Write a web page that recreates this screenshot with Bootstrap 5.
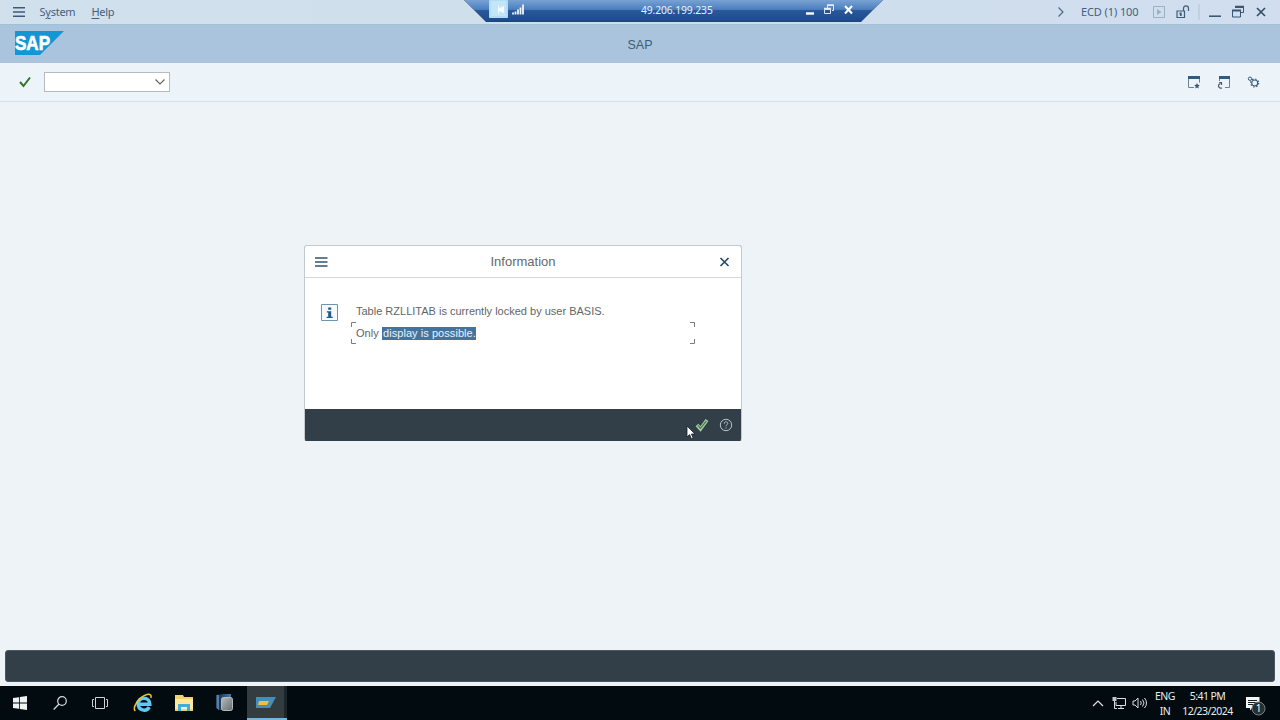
<!DOCTYPE html>
<html lang="en">
<head>
<meta charset="utf-8">
<meta name="viewport" content="width=device-width, initial-scale=1">
<title>SAP</title>
<link href="https://cdn.jsdelivr.net/npm/bootstrap@5.3.0/dist/css/bootstrap.min.css" rel="stylesheet">
<style>
body{width:1280px;height:720px;overflow:hidden;background:#edf3f7;font-family:"Liberation Sans",sans-serif;color:#3d5870}
svg{display:block;flex:none}
.menu-bar{height:24px;background:linear-gradient(90deg,#d0e0ec,#cfdeeb 60%,#d0def0);font:11px/24px "Noto Sans",sans-serif;padding-left:12px;color:#44617f}
.menu-word{letter-spacing:-.25px}
.menu-bar u{text-underline-offset:1.5px;text-decoration-thickness:1px}
.title-bar{height:39px;background:#a9c4dc;border-top:1px solid #a5bed2}
.title-bar h1{font-size:12.5px;line-height:40px;margin:0;color:#3f5d78}
.tool-bar{height:39px;background:#edf4f9;border-bottom:1px solid #d9e1e7}
.cmd-field{width:126px;height:20px;background:#fff;border:1px solid #b5bcc1;margin-left:13px;padding-right:3px}
.work-area{height:548px}
.status-bar{height:32px;margin:0 5px 4px;background:#323e48;border:1px solid #4b565e;border-radius:3px}
.task-bar{height:34px;background:#020b0f;color:#e8eef0;font:10.5px/15px "Noto Sans",sans-serif}
.task-item{width:40px;height:34px}
.tray{padding-top:2px}
.rdp-bar{left:464px;top:0;width:420px;height:22px}
.rdp-title{left:641px;top:3px;font:10.3px/14px "Noto Sans",sans-serif;letter-spacing:-.15px;color:#e9f2fb;white-space:nowrap}
.info-dialog{left:304px;top:245px;width:438px;height:196px;background:#fff;border:1px solid #c2c9cf;border-bottom-color:#414d56;border-radius:3px;color:#626669}
.dialog-head{height:32px;border-bottom:1px solid #d3d7da;padding:0 10px 0 9px}
.dialog-head h2{font-size:13px;line-height:30px;margin:0;color:#63696d}
.dialog-main{height:131px;padding:25px 0 0 16px;font-size:11px;line-height:16px;white-space:nowrap}
.focus-row{width:344px;height:22px;margin-left:-5px;padding:3px 0 0 5px;letter-spacing:.06px}
.focus-row svg{left:0;top:0}
.marked{background:#43749f;color:#e8f2fa;padding:0 0 0 1px;line-height:12px;height:13px;display:inline-block}
.dialog-foot{height:32px;background:#323e48;border-radius:0 0 2px 2px;padding-right:8px}
.pointer{left:686px;top:425px}
</style>
</head>
<body class="position-relative">
<header>
  <nav class="menu-bar d-flex align-items-center">
    <svg width="14" height="14" stroke="#3c5a78" stroke-width="1.4"><path d="M1 2.8h12M1 7h12M1 11.2h12"/></svg>
    <span class="menu-word" style="margin-left:13.5px">S<u>y</u>stem</span><span class="menu-word" style="margin-left:16px"><u>H</u>elp</span>
    <div class="d-flex align-items-center ms-auto" style="padding-right:6px">
      <svg width="10" height="12" fill="none" stroke="#49647e" stroke-width="1.1"><path d="M2.500 1.500 7 6 2.500 10.500"/></svg>
      <span class="text-center text-nowrap" style="width:57px;margin-left:15px;letter-spacing:-.1px">ECD (1) 100</span>
      <svg style="margin:0 10px 0 15px" width="12" height="12" fill="none" stroke="#9dafc1"><path d="M.5.5h11v11H.5z"/><path fill="#9dafc1" stroke="none" d="M4 3v6l4.500-3z"/></svg>
      <svg width="16" height="16" fill="none" stroke="#405d79" stroke-width="1.200"><path d="M2 7h7.500v6.500H2z"/><path d="M8.500 7V4.500c0-3.500 5-3.500 5 0V7"/><path d="M5.800 8.500v3.500M4.500 9.500h2" stroke-width="1.800"/></svg>
      <svg style="margin-left:6px" width="4" height="18"><path d="M2 1v16" stroke="#b4c4d3"/></svg>
      <svg style="margin-left:7px" width="14" height="14"><path d="M1 11.200h12" stroke="#35516c" stroke-width="1.500"/></svg>
      <svg style="margin-left:9px" width="15" height="14" fill="none" stroke="#3a5671"><path d="M1.500 5.500h8v6.500h-8zM4.500 3V1.500h8v6h-2.500"/><path d="M1 5.500h9M4 1.800h9" stroke-width="2.200"/></svg>
      <svg style="margin:0 8px 0 10px" width="10" height="10" stroke="#304a62" stroke-width="1.600"><path d="m1 1 8 8M9 1 1 9"/></svg>
    </div>
  </nav>
  <div class="title-bar position-relative">
    <svg class="position-absolute" style="left:15px;top:6px" width="49" height="24"><path fill="#1297d4" d="M0 0h49L25 24H0z"/><text x="0" y="18.800" textLength="35" lengthAdjust="spacingAndGlyphs" font-family="Liberation Sans" font-size="20" font-weight="700" fill="#fff" stroke="#fff" stroke-width=".7">SAP</text></svg>
    <h1 class="text-center fw-normal">SAP</h1>
  </div>
</header>
<div class="tool-bar d-flex align-items-center">
  <svg style="margin-left:19px" width="12" height="12" fill="none" stroke="#2f7527" stroke-width="2"><path d="m1 6 3.500 4L11 1.500"/></svg>
  <div class="cmd-field d-flex align-items-center justify-content-end"><svg width="12" height="8" fill="none" stroke="#596269" stroke-width="1.100"><path d="m1.500 1.500 4.500 4.500L10.500 1.500"/></svg></div>
  <div class="d-flex align-items-center ms-auto" style="padding-right:19px;gap:16px">
    <svg width="14" height="14" fill="none" stroke="#6c8294"><path d="M7 12.500H1.500v-11h11v6"/><path d="M1 2.500h12" stroke="#315b83" stroke-width="3"/><path fill="#355775" stroke="none" d="m10 8 .8 1.800 2 .2-1.500 1.400.5 2.100-1.800-1.100-1.800 1.100.5-2.100L7.200 10l2-.2z"/></svg>
    <svg width="14" height="14" fill="none" stroke="#6c8294"><path d="M2.500 6V1.500h10v11H8"/><path d="M2 2.500h11" stroke="#315b83" stroke-width="3"/><path stroke="#3b5b77" stroke-width="1.200" d="M5 13c-3.500 1-5-3.500-1.500-4.500M2.200 7.500h2.300V10"/></svg>
    <svg width="14" height="14" fill="none" stroke="#3b5b77"><circle cx="3" cy="3.700" r="1.700"/><circle cx="7.700" cy="8" r="3" stroke-width="1.100"/><circle cx="7.700" cy="8" r="4" stroke-width="1.200" stroke-dasharray="1.400 1.740"/></svg>
  </div>
</div>
<main class="work-area"></main>
<div class="status-bar"></div>
<footer class="task-bar d-flex align-items-center">
  <div class="task-item d-flex align-items-center justify-content-center"><svg width="14" height="14" fill="#eef2f3"><path d="M0 2l6-.8v5.400H0zM6.800 1 14 0v6.600H6.800zM0 7.400h6v5.400L0 12zM6.800 7.400H14V14l-7.200-1z"/></svg></div>
  <div class="task-item d-flex align-items-center justify-content-center"><svg width="14" height="14" fill="none" stroke="#d6dddf" stroke-width="1.200"><circle cx="9" cy="5" r="4.300"/><path d="M6 8 .7 13.500"/></svg></div>
  <div class="task-item d-flex align-items-center justify-content-center"><svg width="16" height="14" fill="none" stroke="#cbd3d5"><path d="M3.500 1.500h9v11h-9zM2 3.500H.5v7H2M14 3.500h1.500v7H14"/></svg></div>
  <div class="task-item d-flex align-items-center justify-content-center" style="margin-left:3px"><svg width="20" height="20" fill="none"><path d="M16.300 14.200c-3 5-11.200 3.500-11.200-3.700 0-7 11.700-7.300 11.700.8H6.500" stroke="#62c8f5" stroke-width="3.500"/><path d="M2.300 18C-1 15 5.500 3.800 14 1.600c3.500-.9 4.800.8 3.700 3.300" stroke="#edc43c" stroke-width="1.500"/></svg></div>
  <div class="task-item d-flex align-items-center justify-content-center"><svg style="margin-left:2px" width="20" height="18"><path fill="#f3d16b" d="M1 2V1h8l1 2h9v14H1z"/><path fill="#ffe89a" d="M1 5h18v10H1z"/><path fill="#45acd8" d="M4 10h12v7h-3v-4H7v4H4z"/><path fill="#f1f5e8" d="M7 13h6v2H7z"/></svg></div>
  <div class="task-item d-flex align-items-center justify-content-center"><svg style="margin-left:1px" width="18" height="20"><defs><linearGradient id="b"><stop stop-color="#10233f"/><stop offset="1" stop-color="#437ab3"/></linearGradient><linearGradient id="g" x2="1" y2="1"><stop stop-color="#b5babd"/><stop offset="1" stop-color="#666c70"/></linearGradient></defs><path fill="url(#b)" d="M1 2 9 1h7v16H4l-3-2z"/><path d="M1.500 2v13L4 17V2z" fill="#5f7d9f"/><rect x="6.500" y="4.500" width="11" height="13" rx="2" fill="url(#g)" stroke="#b5babd"/></svg></div>
  <div class="task-item d-flex align-items-center justify-content-center position-relative" style="margin-left:4px;background:#333c40;border-bottom:2px solid #76b5de;box-shadow:inset -3px 0 #1b262a"><svg style="margin-right:2px" width="20" height="14"><path fill="#458dba" d="M0 2h20l-6 11H0z"/><path fill="#f3bd36" d="M3 6h10l-2 4H2z"/></svg></div>
  <div class="tray d-flex align-items-center ms-auto">
    <svg width="12" height="10" fill="none" stroke="#e1e7e8" stroke-width="1.200"><path d="m1 7 5-5 5 5"/></svg>
    <svg style="margin:0 0 2px 8px" width="15" height="14" fill="none" stroke="#dce2e4"><path d="M5 2.500h8.500v7H4V6M9 9.500v3M6 12.500h6M2.500 5v7.500H5"/><path fill="#bfc7c9" stroke="none" d="M.5 1h4v4h-4z"/></svg>
    <svg style="margin:0 0 2px 5px" width="16" height="14" fill="none" stroke="#d8dfe1"><path d="M1 5h2l3-3v10L3 9H1zM8.500 5q1.500 2 0 4M10.500 3.500q3 3.500 0 7M12.500 2q4 5 0 10"/></svg>
    <div class="text-center" style="width:20px;margin-left:7px;letter-spacing:-.5px">ENG<br>IN</div>
    <div class="d-flex flex-column align-items-center text-nowrap" style="width:51px;margin-left:7px;letter-spacing:-.55px"><span>5:41 PM</span><span>12/23/2024</span></div>
    <svg style="margin:2px 13px 0 12px" width="22" height="22"><path fill="#f4f6f6" d="M1 3h13.500v11H7l-2 2.500V14H1z"/><path stroke="#152024" d="M3 6.500h9M3 8.500h9M3 10.500h6"/><circle cx="13.500" cy="14.500" r="6.500" fill="#262f33" stroke="#768084"/><text x="13.500" y="18.200" text-anchor="middle" font-family="Noto Sans" font-size="10" fill="#fff">1</text></svg>
  </div>
</footer>

<svg class="rdp-bar position-absolute"><defs><linearGradient id="r" x2="0" y2="1"><stop stop-color="#78a2d4"/><stop offset=".43" stop-color="#4c7ebd"/><stop offset=".48" stop-color="#28579b"/><stop offset=".9" stop-color="#204d8b"/><stop offset="1" stop-color="#19447d"/></linearGradient></defs>
  <path fill="url(#r)" d="M0 0h419l-22 22H22z"/><path d="m0 0 22 22M419 0l-22 22" stroke="#7890ab"/>
  <rect x="25" y="0" width="19" height="18" rx="1" fill="#b3ddf5"/><rect x="27" y="1" width="15" height="15" fill="#c3e5f8"/><path fill="#f2fbff" d="M34 5.500h1V8l5-2v7l-5-2v2.500h-1z"/>
  <path d="M49.500 15v-2M52 15v-3M54.500 15v-5M57 15V8M59.500 15V5" transform="translate(-.5 -.5)" stroke="#eef5fc" stroke-width="1.800"/>
  <path d="M342 13.500h8" stroke="#fff" stroke-width="2.400"/><path d="M360.500 9.500h6v4h-6zM363.500 8V5.500h6v5H368" fill="none" stroke="#dce7f3"/><path d="M360 8.500h7M363 5h7" stroke="#e6eef7" stroke-width="1.300"/><path d="m381 6 7 7.500M388 6l-7 7.500" stroke="#fff" stroke-width="2.100"/>
</svg>
<span class="rdp-title position-absolute" style="letter-spacing:-.1px">49.206.199.235</span>

<section class="info-dialog position-absolute">
  <div class="dialog-head d-flex align-items-center justify-content-between">
    <svg width="14" height="14" stroke="#315370" stroke-width="1.500"><path d="M1 3h12.500M1 7h12.500M1 11h12.500"/></svg>
    <h2 class="fw-normal">Information</h2>
    <svg width="13" height="14" stroke="#294b66" stroke-width="1.700"><path d="m2.500 3 8 8M10.500 3l-8 8"/></svg>
  </div>
  <div class="dialog-main d-flex">
    <svg style="margin-top:1px" width="18" height="18"><path fill="#f6fafc" stroke="#6e94b0" d="M.5.500h16v16H.5z"/><path fill="#205a87" d="M7.200 3.500h3v2.300h-3zM5.800 7.200h4.400v5.600h1.500V14H5.600v-1.200h1.600V8.400H5.800z"/></svg>
    <div style="margin-left:17px">
      <div>Table RZLLITAB is currently locked by user BASIS.</div>
      <div class="focus-row position-relative" style="margin-top:3px"><svg class="position-absolute" width="344" height="22" fill="none" stroke="#777d81"><path d="M5 .5H.5V5M.5 17v4.500H5M339 .5h4.500V5M343.500 17v4.500H339"/></svg>Only <span class="marked">display is possible.</span></div>
    </div>
  </div>
  <div class="dialog-foot d-flex align-items-center justify-content-end">
    <svg width="14" height="14" fill="none"><path d="m2 7 3.500 4L12 2" stroke="#a5d0a2" stroke-width="3.500"/><path d="m2.800 7.500 2.700 2.800L11.400 2.800" stroke="#4e7453" stroke-width="1.200"/></svg>
    <svg style="margin-left:10px" width="14" height="14" fill="none" stroke="#bac2c7"><circle cx="7" cy="7" r="5.700"/><path d="M5.200 5.700C5.200 3 9 3.400 8.800 5.600 8.700 6.800 7 6.700 7 8.300M7 9.500v1.100"/></svg>
  </div>
</section>
<svg class="pointer position-absolute" width="10" height="16"><path fill="#fff" stroke="#16202a" stroke-width=".8" d="M1 1v11l2.600-2.400 1.800 4.200 1.800-.8-1.800-4H9z"/></svg>
<script src="https://cdn.jsdelivr.net/npm/bootstrap@5.3.0/dist/js/bootstrap.bundle.min.js"></script>
</body>
</html>
